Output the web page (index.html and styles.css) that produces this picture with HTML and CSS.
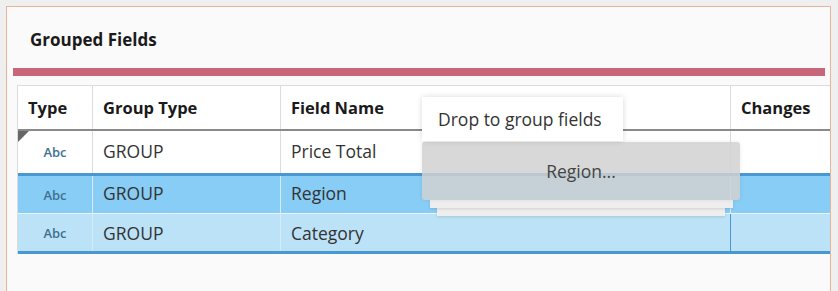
FILE: index.html
```html
<!DOCTYPE html>
<html>
<head>
<meta charset="utf-8">
<link rel="stylesheet" href="styles.css">
</head>
<body>
<div class="panel">
  <div class="title">Grouped Fields</div>
  <div class="bar"></div>
  <div class="table">
    <div class="row head">
      <div class="cell c1">Type</div>
      <div class="cell c2">Group Type</div>
      <div class="cell c3">Field Name</div>
      <div class="cell c4">Changes</div>
    </div>
    <div class="row r1">
      <div class="cell c1 abc"><span class="corner"></span>Abc</div>
      <div class="cell c2">GROUP</div>
      <div class="cell c3">Price Total</div>
      <div class="cell c4"></div>
    </div>
    <div class="row r2">
      <div class="cell c1 abc">Abc</div>
      <div class="cell c2">GROUP</div>
      <div class="cell c3">Region</div>
      <div class="cell c4"></div>
    </div>
    <div class="row r3">
      <div class="cell c1 abc">Abc</div>
      <div class="cell c2">GROUP</div>
      <div class="cell c3">Category</div>
      <div class="cell c4"></div>
    </div>
  </div>
  <div class="strip s2"></div>
  <div class="strip s1"></div>
  <div class="ghost">Region...</div>
  <div class="tip">Drop to group fields</div>
</div>
</body>
</html>
```
FILE: styles.css
```css
html, body {
  margin: 0;
  padding: 0;
  background: #efefef;
  font-family: "Open Sans", "Noto Sans", sans-serif;
  color: #333;
}
.panel {
  position: relative;
  margin: 6px 0 0 6px;
  width: 825px;
  height: 290px;
  border: 1px solid #e6b597;
  border-bottom: none;
  background: #fafafa;
  overflow: hidden;
  box-sizing: border-box;
}
.title {
  height: 61px;
  box-sizing: border-box;
  padding: 21px 0 0 23px;
  font-size: 17px;
  font-weight: 700;
  color: #1a1a1a;
  line-height: 24px;
}
.bar {
  height: 8px;
  margin: 0 5px 0 6px;
  background: #c9677a;
}
.table {
  margin: 9px 0 0 10px;
  width: 830px;
  background: #fff;
  border-top: 1px solid #dcdcdc;
  border-left: 1px solid #dcdcdc;
}
.row {
  display: grid;
  grid-template-columns: 75px 188px 450px 1fr;
  box-sizing: border-box;
}
.cell {
  box-sizing: border-box;
  border-right: 1px solid #dcdcdc;
  padding-left: 10px;
  display: flex;
  align-items: center;
  font-size: 17.5px;
  color: #333;
  position: relative;
}
.head {
  height: 45px;
  border-bottom: 2px solid #8a8a8a;
}
.head .cell {
  font-weight: 700;
  font-size: 16.5px;
  color: #1a1a1a;
}
.r1 { height: 42px; background: #fff; }
.r1 .cell, .r2 .cell { padding-bottom: 3px; }
.r1 .abc, .r2 .abc { padding-bottom: 0; }
.r2 {
  height: 41px;
  background: #88cdf5;
  border-top: 3px solid #4a98d3;
  border-bottom: 1px solid #e8f4fc;
}
.r3 {
  height: 40px;
  background: #bce2f7;
  border-bottom: 3px solid #4a98d3;
}
.r2 .cell, .r3 .cell { border-right-color: #d6ecfa; }
.r3 .c3 { border-right-color: #4a98d3; }
.abc {
  justify-content: center;
  padding-left: 0;
  font-size: 13px;
  font-weight: 600;
  color: #3e7190;
}
.corner {
  position: absolute;
  left: 0;
  top: 0;
  width: 0;
  height: 0;
  border-top: 11px solid #666;
  border-right: 11px solid transparent;
}
.tip {
  position: absolute;
  left: 415px;
  top: 90px;
  width: 201px;
  height: 44px;
  box-sizing: border-box;
  padding-left: 16px;
  display: flex;
  align-items: center;
  background: #fff;
  font-size: 17.5px;
  color: #333;
  white-space: nowrap;
  box-shadow: 0 0 6px rgba(0,0,0,0.15);
}
.ghost {
  position: absolute;
  left: 415px;
  top: 135px;
  width: 318px;
  height: 58px;
  border-radius: 3px;
  background: rgba(208,208,208,0.84);
  display: flex;
  align-items: center;
  justify-content: center;
  font-size: 17.5px;
  color: #444;
  box-shadow: 0 0 4px rgba(0,0,0,0.08);
}
.strip {
  position: absolute;
  background: #eeeeee;
  box-shadow: 0 1px 3px rgba(0,0,0,0.12);
}
.s1 {
  left: 423px;
  top: 193px;
  width: 303px;
  height: 8px;
}
.s2 {
  left: 430px;
  top: 201px;
  width: 288px;
  height: 8px;
}
```
